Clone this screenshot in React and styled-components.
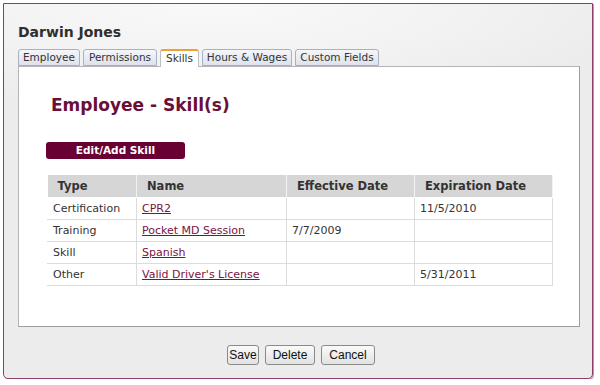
import React from "react";
import styled, { createGlobalStyle } from "styled-components";

const GlobalStyle = createGlobalStyle`
  html, body { margin: 0; padding: 0; background: #ffffff; }
  body { font-family: "DejaVu Sans", Verdana, sans-serif; color: #333; }
`;

const skills = [
  { type: "Certification", name: "CPR2", effective: "", expires: "11/5/2010" },
  { type: "Training", name: "Pocket MD Session", effective: "7/7/2009", expires: "" },
  { type: "Skill", name: "Spanish", effective: "", expires: "" },
  { type: "Other", name: "Valid Driver's License", effective: "", expires: "5/31/2011" },
];

const tabs = [
  { label: "Employee", width: 62 },
  { label: "Permissions", width: 74 },
  { label: "Skills", width: 39 },
  { label: "Hours & Wages", width: 90 },
  { label: "Custom Fields", width: 84 },
];

const buttons = [
  { label: "Save", width: 32 },
  { label: "Delete", width: 50 },
  { label: "Cancel", width: 54 },
];

const Page = styled.div`
  padding: 3px 0 0 3px;
`;

const Frame = styled.div`
  width: 590px;
  height: 376px;
  border: 1px solid #8d3c69;
  border-radius: 0 0 5px 5px;
  box-shadow: 1px 1px 0 #c992b0;
  background: radial-gradient(ellipse 75% 28% at 35% 0%, #f9f9f9 0%, #f2f2f2 60%, #ececec 100%);
  padding: 19px 14px 0 14px;
  box-sizing: border-box;
  display: flex;
  flex-direction: column;
`;

const Title = styled.h1`
  margin: 0 0 8px 0;
  font-size: 14px;
  line-height: 18px;
  font-weight: bold;
  color: #2f2f2f;
`;

const TabBar = styled.div`
  display: flex;
  gap: 3px;
  height: 17px;
  position: relative;
  z-index: 1;
`;

const Tab = styled.div`
  width: ${(p) => p.$w}px;
  box-sizing: border-box;
  height: ${(p) => (p.$active ? 18 : 17)}px;
  border: 1px solid ${(p) => (p.$active ? "#b9bec8" : "#a9b0bf")};
  border-top: ${(p) => (p.$active ? "2px solid #f0a030" : "1px solid #a9b0bf")};
  border-bottom: ${(p) => (p.$active ? "none" : "1px solid #a9b0bf")};
  border-radius: 3px 3px 0 0;
  background: ${(p) =>
    p.$active ? "#ffffff" : "linear-gradient(#f4f6fa, #dde2ec)"};
  font-size: 10.5px;
  line-height: ${(p) => (p.$active ? 14 : 15)}px;
  text-align: center;
  color: #333;
  white-space: nowrap;
`;

const Panel = styled.div`
  width: 562px;
  height: 261px;
  box-sizing: border-box;
  background: #ffffff;
  border: 1px solid #b5b5b5;
  border-right-color: #9d9d9d;
  border-bottom-color: #9d9d9d;
  padding: 27px 0 0 27px;
`;

const Heading = styled.h2`
  margin: 0 0 0 5px;
  font-size: 17px;
  line-height: 22px;
  font-weight: bold;
  color: #6a0f37;
`;

const ActionButton = styled.div`
  margin-top: 26px;
  width: 139px;
  height: 17px;
  box-sizing: border-box;
  background: #690033;
  border-radius: 3px;
  color: #ffffff;
  font-size: 10.5px;
  font-weight: bold;
  line-height: 17px;
  text-align: center;
`;

const Table = styled.table`
  margin-top: 16px;
  margin-left: 1px;
  width: 505px;
  border-collapse: collapse;
  table-layout: fixed;
  font-size: 11px;
`;

const Th = styled.th`
  width: ${(p) => p.$w}px;
  box-sizing: border-box;
  height: 22px;
  padding: 0 0 0 10px;
  background: #d6d6d6;
  border-right: 1px solid #f2f2f2;
  border-bottom: 1px solid #ffffff;
  text-align: left;
  font-size: 11.5px;
  font-weight: bold;
  color: #333;
`;

const Td = styled.td`
  height: 21px;
  padding: 0 0 0 5px;
  border: 1px solid #dcdcdc;
  border-left-color: ${(p) => (p.$first ? "transparent" : "#dcdcdc")};
  border-top: none;
  color: #333;
  white-space: nowrap;
`;

const SkillLink = styled.a`
  color: #7a1244;
  text-decoration: underline;
`;

const ButtonRow = styled.div`
  margin-top: 18px;
  display: flex;
  justify-content: center;
  gap: 6px;
  padding-left: 6px;
`;

const FormButton = styled.button`
  width: ${(p) => p.$w}px;
  height: 20px;
  padding: 0;
  border: 1px solid #8a8a8a;
  border-radius: 3px;
  background: linear-gradient(#fafafa, #e2e2e2);
  font-family: "Liberation Sans", Arial, sans-serif;
  font-size: 12px;
  color: #111;
`;

export default function App() {
  return (
    <>
      <GlobalStyle />
      <Page>
        <Frame>
          <Title>Darwin Jones</Title>
          <TabBar>
            {tabs.map((t) => (
              <Tab key={t.label} $w={t.width} $active={t.label === "Skills"}>
                {t.label}
              </Tab>
            ))}
          </TabBar>
          <Panel>
            <Heading>Employee - Skill(s)</Heading>
            <ActionButton>Edit/Add Skill</ActionButton>
            <Table>
              <thead>
                <tr>
                  <Th $w={89}>Type</Th>
                  <Th $w={150}>Name</Th>
                  <Th $w={128}>Effective Date</Th>
                  <Th $w={138}>Expiration Date</Th>
                </tr>
              </thead>
              <tbody>
                {skills.map((s) => (
                  <tr key={s.name}>
                    <Td $first>{s.type}</Td>
                    <Td>
                      <SkillLink href="#">{s.name}</SkillLink>
                    </Td>
                    <Td>{s.effective}</Td>
                    <Td>{s.expires}</Td>
                  </tr>
                ))}
              </tbody>
            </Table>
          </Panel>
          <ButtonRow>
            {buttons.map((b) => (
              <FormButton key={b.label} $w={b.width}>
                {b.label}
              </FormButton>
            ))}
          </ButtonRow>
        </Frame>
      </Page>
    </>
  );
}
